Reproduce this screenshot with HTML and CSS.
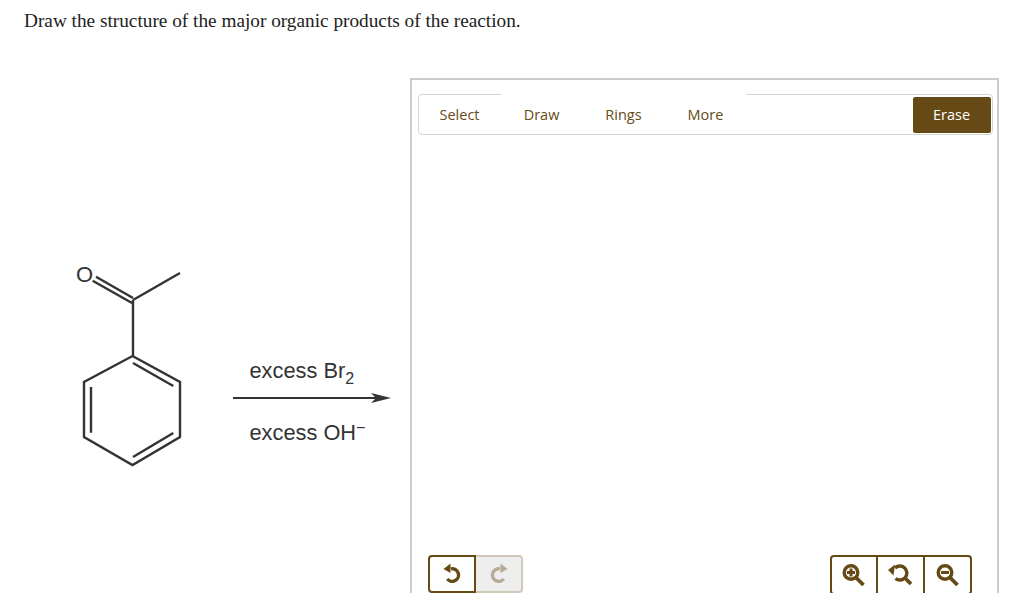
FILE: index.html
```html
<!DOCTYPE html>
<html lang="en">
<head>
<meta charset="utf-8">
<title>Draw the structure</title>
<link rel="stylesheet" href="styles.css">
</head>
<body>
<div class="page">
  <h1 class="question">Draw the structure of the major organic products of the reaction.</h1>
  <div class="main">
    <div class="reaction">
      <svg class="scheme" width="410" height="515" viewBox="0 78 410 515">
        <g class="bond">
          <path d="M96 276.7L133 298M92.7 280.7L132 303M133 300L180 273M133 300V356"/>
          <path d="M132.5 356L180 382V437L132.5 465L84 437V382Z"/>
          <path d="M133 363L173.3 386M91 387V432.7M133 457L173.3 433"/>
        </g>
        <text class="atom" x="84.5" y="282">O</text>
        <text class="cond" x="249.5" y="378">excess Br<tspan class="sub" dy="6">2</tspan></text>
        <path class="arrow-line" d="M233 398H378"/>
        <path class="arrow-head" d="M371 393L391 398L371 403L376 398Z"/>
        <text class="cond" x="249.5" y="439.5">excess OH<tspan class="sup" dy="-7">−</tspan></text>
      </svg>
    </div>
    <div class="panel">
      <div class="toolbar">
        <div class="tabs">
          <span class="tab">Select</span>
          <span class="tab">Draw</span>
          <span class="tab">Rings</span>
          <span class="tab">More</span>
        </div>
        <span class="erase">Erase</span>
      </div>
      <div class="canvas"></div>
      <div class="footer">
        <div class="group">
          <span class="btn btn-on">
            <svg width="28" height="28" viewBox="-14 -14 28 28"><path class="ring" d="M-1 -5.1A6.3 6.3 0 1 1 -4.7 5"/><path class="solid" d="M-1.5 -10.5L-8.5 -5 -1.5 -1Z"/></svg>
          </span>
          <span class="btn btn-off">
            <svg class="mirror" width="28" height="28" viewBox="-14 -14 28 28"><path class="ring" d="M-1 -5.1A6.3 6.3 0 1 1 -4.7 5"/><path class="solid" d="M-1.5 -10.5L-8.5 -5 -1.5 -1Z"/></svg>
          </span>
        </div>
        <div class="group group-zoom">
          <span class="btn btn-on">
            <svg width="28" height="28" viewBox="-14 -14 28 28"><circle class="ring" cx="-3" cy="-1.5" r="6.8"/><path class="handle" d="M2 3.5L9.5 11"/><path class="thin" d="M-7 -1.5H1M-3 -5.5V2.5"/></svg>
          </span>
          <span class="btn btn-on">
            <svg width="28" height="28" viewBox="-14 -14 28 28"><path class="ring" d="M-6 -6A7 7 0 1 1 -5.5 4.5"/><path class="handle" d="M4 4L10 10"/><path class="solid" d="M-13 -4L-6 -9.5 -7.5 1.5Z"/></svg>
          </span>
          <span class="btn btn-on">
            <svg width="28" height="28" viewBox="-14 -14 28 28"><circle class="ring" cx="-3" cy="-1.5" r="6.8"/><path class="handle" d="M2 3.5L9.5 11"/><path class="thin" d="M-7 -1.5H1"/></svg>
          </span>
        </div>
      </div>
    </div>
  </div>
</div>
</body>
</html>
```
FILE: styles.css
```css
html, body { margin: 0; padding: 0; background: #fff; }
.page { width: 1024px; height: 593px; overflow: hidden; display: flex; flex-direction: column; }
.question {
  margin: 0; padding: 10px 0 0 24px; height: 78px; flex: none; box-sizing: border-box;
  font: 400 19.28px/21px "Liberation Serif", serif; color: #222;
}
.main { display: flex; flex: 1; min-height: 0; }
.reaction { width: 410px; flex: none; }
.scheme { display: block; }
.bond path { fill: none; stroke: #333; stroke-width: 2.4; stroke-linejoin: miter; }
.atom { font: 22px "Liberation Sans", sans-serif; fill: #333; text-anchor: middle; }
.cond { font: 21.8px "Liberation Sans", sans-serif; fill: #333; }
.sub, .sup { font-size: 16px; }
.arrow-line { stroke: #333; stroke-width: 2; fill: none; }
.arrow-head { fill: #333; }
.panel {
  width: 589px; height: 515px; flex: none; box-sizing: border-box;
  border: 2px solid #ccc; border-bottom: 0; padding: 14px 4px 0 6px;
  display: flex; flex-direction: column;
  font: 14.5px "Open Sans", sans-serif;
}
.toolbar {
  height: 41px; flex: none; box-sizing: border-box; position: relative;
  display: flex; justify-content: space-between; align-items: center;
  border: 1px solid #d4d4d4; border-radius: 4px; padding: 0 1.5px 0 0;
}
.toolbar::before {
  content: ""; position: absolute; left: 82px; top: -1px; width: 245px; height: 1px; background: #fff;
}
.tabs { display: flex; margin-left: -0.5px; }
.tab { width: 82px; text-align: center; color: #664a16; }
.erase {
  width: 78px; height: 36px; display: flex; align-items: center; justify-content: center;
  background: #664a16; color: #fff; border-radius: 2px;
}
.canvas { flex: 1; }
.footer { display: flex; justify-content: space-between; height: 38px; flex: none; margin: 0 21px 0 10px; }
.group { display: flex; }
.group-zoom { height: 40px; }
.btn {
  width: 47px; height: 38px; box-sizing: border-box; display: flex; align-items: center; justify-content: center;
  border: 2px solid #664a16; border-left-width: 0; flex: none;
}
.group-zoom .btn { height: 40px; padding-bottom: 2px; }
.btn:first-child { width: 48px; border-left-width: 2px; border-radius: 4px 0 0 4px; }
.btn:last-child { border-radius: 0 4px 4px 0; }
.btn-off { background: #eee; border-color: #d0c8b8; color: #b5ab96; }
.btn-on { background: #fff; color: #664a16; }
.mirror { transform: scaleX(-1); }
.ring { fill: none; stroke: currentColor; stroke-width: 3.4; }
.handle { fill: none; stroke: currentColor; stroke-width: 3.8; }
.thin { fill: none; stroke: currentColor; stroke-width: 3; }
.solid { fill: currentColor; }
```
